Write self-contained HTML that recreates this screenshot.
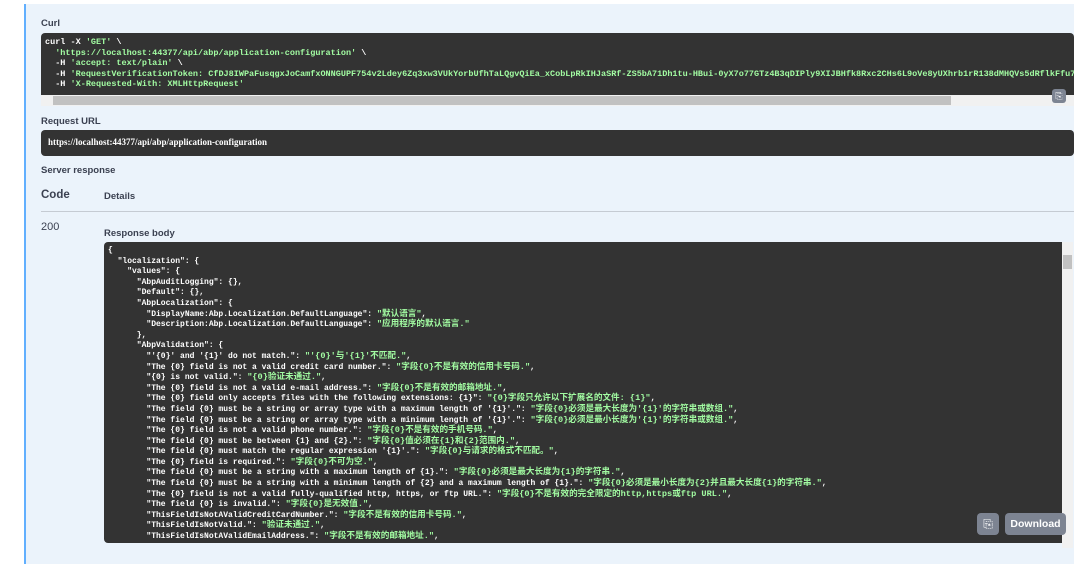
<!DOCTYPE html>
<html><head><meta charset="utf-8"><style>
*{margin:0;padding:0;box-sizing:border-box}
body{width:1080px;height:548px;overflow:hidden;background:#fff;font-family:"Liberation Sans","Noto Sans CJK SC",sans-serif;position:relative}
.panel{position:absolute;left:24px;top:4px;width:1050px;height:560px;background:#ebf3fb;border-left:2px solid #61affe}
.lbl{position:absolute;font-size:9.5px;font-weight:bold;color:#3b4151}
.code{position:absolute;background:#333;color:#fff;font-family:"Liberation Mono","Noto Sans CJK SC",monospace;font-weight:bold;font-size:8px;line-height:10.6px;white-space:pre;overflow:hidden}
.s{color:#a2fca2}
.c{font-size:8.6px;line-height:8px}
.btn{position:absolute;background:#7d8492;border-radius:4px;color:#fff}
</style></head><body>
<div class="panel"></div>
<div class="lbl" style="left:41px;top:18px">Curl</div>
<div class="code" style="left:41px;top:33px;width:1033px;height:62px;border-radius:4px 4px 0 0;padding:4px 4px;font-size:8.5px">curl -X <span class="s">'GET'</span> \
  <span class="s">'https://localhost:44377/api/abp/application-configuration'</span> \
  -H <span class="s">'accept: text/plain'</span> \
  -H <span class="s">'RequestVerificationToken: CfDJ8IWPaFusqgxJoCamfxONNGUPF754v2Ldey6Zq3xw3VUkYorbUfhTaLQgvQiEa_xCobLpRkIHJaSRf-ZS5bA71Dh1tu-HBui-0yX7o77GTz4B3qDIPly9XIJBHfk8Rxc2CHs6L9oVe8yUXhrb1rR138dMHQVs5dRflkFfu7o2CNqK</span>
  -H <span class="s">'X-Requested-With: XMLHttpRequest'</span></div>
<div style="position:absolute;left:41px;top:95px;width:1033px;height:11px;background:#f1f1f1"></div>
<div style="position:absolute;left:53px;top:96px;width:898px;height:9px;background:#c1c1c1"></div>
<div class="btn" style="left:1052px;top:89px;width:14px;height:14px;border-radius:3px;font-size:9px;line-height:14px;text-align:center">⎘</div>
<div class="lbl" style="left:41px;top:116px">Request URL</div>
<div class="code" style="left:41px;top:130px;width:1033px;height:26px;border-radius:4px;padding:7px 7px;font-family:'Liberation Serif',serif;font-size:9px">https://localhost:44377/api/abp/application-configuration</div>
<div class="lbl" style="left:41px;top:165px">Server response</div>
<div class="lbl" style="left:41px;top:189px;font-size:11.5px">Code</div>
<div class="lbl" style="left:104px;top:191px">Details</div>
<div style="position:absolute;left:41px;top:211px;width:1033px;height:1px;background:#c5cbd3"></div>
<div style="position:absolute;left:41px;top:221px;font-size:11px;color:#3b4151">200</div>
<div class="lbl" style="left:104px;top:228px">Response body</div>
<div class="code" style="left:104px;top:242px;width:958px;height:301px;border-radius:4px 0 0 4px;padding:4px 4px">{
  "localization": {
    "values": {
      "AbpAuditLogging": {},
      "Default": {},
      "AbpLocalization": {
        "DisplayName:Abp.Localization.DefaultLanguage": <span class="s c">"默认语言"</span>,
        "Description:Abp.Localization.DefaultLanguage": <span class="s c">"应用程序的默认语言."</span>
      },
      "AbpValidation": {
        "'{0}' and '{1}' do not match.": <span class="s c">"'{0}'与'{1}'不匹配."</span>,
        "The {0} field is not a valid credit card number.": <span class="s c">"字段{0}不是有效的信用卡号码."</span>,
        "{0} is not valid.": <span class="s c">"{0}验证未通过."</span>,
        "The {0} field is not a valid e-mail address.": <span class="s c">"字段{0}不是有效的邮箱地址."</span>,
        "The {0} field only accepts files with the following extensions: {1}": <span class="s c">"{0}字段只允许以下扩展名的文件: {1}"</span>,
        "The field {0} must be a string or array type with a maximum length of '{1}'.": <span class="s c">"字段{0}必须是最大长度为'{1}'的字符串或数组."</span>,
        "The field {0} must be a string or array type with a minimum length of '{1}'.": <span class="s c">"字段{0}必须是最小长度为'{1}'的字符串或数组."</span>,
        "The {0} field is not a valid phone number.": <span class="s c">"字段{0}不是有效的手机号码."</span>,
        "The field {0} must be between {1} and {2}.": <span class="s c">"字段{0}值必须在{1}和{2}范围内."</span>,
        "The field {0} must match the regular expression '{1}'.": <span class="s c">"字段{0}与请求的格式不匹配。"</span>,
        "The {0} field is required.": <span class="s c">"字段{0}不可为空."</span>,
        "The field {0} must be a string with a maximum length of {1}.": <span class="s c">"字段{0}必须是最大长度为{1}的字符串."</span>,
        "The field {0} must be a string with a minimum length of {2} and a maximum length of {1}.": <span class="s c">"字段{0}必须是最小长度为{2}并且最大长度{1}的字符串."</span>,
        "The {0} field is not a valid fully-qualified http, https, or ftp URL.": <span class="s c">"字段{0}不是有效的完全限定的http,https或ftp URL."</span>,
        "The field {0} is invalid.": <span class="s c">"字段{0}是无效值."</span>,
        "ThisFieldIsNotAValidCreditCardNumber.": <span class="s c">"字段不是有效的信用卡号码."</span>,
        "ThisFieldIsNotValid.": <span class="s c">"验证未通过."</span>,
        "ThisFieldIsNotAValidEmailAddress.": <span class="s c">"字段不是有效的邮箱地址."</span>,</div>
<div style="position:absolute;left:1062px;top:242px;width:11px;height:306px;background:#f1f1f1"></div>
<div style="position:absolute;left:1063px;top:255px;width:9px;height:14px;background:#c1c1c1"></div>
<div class="btn" style="left:977px;top:513px;width:22px;height:22px;font-size:12px;line-height:22px;text-align:center">⎘</div>
<div class="btn" style="left:1005px;top:513px;width:61px;height:22px;font-size:10.5px;font-weight:bold;line-height:22px;text-align:center">Download</div>
</body></html>
